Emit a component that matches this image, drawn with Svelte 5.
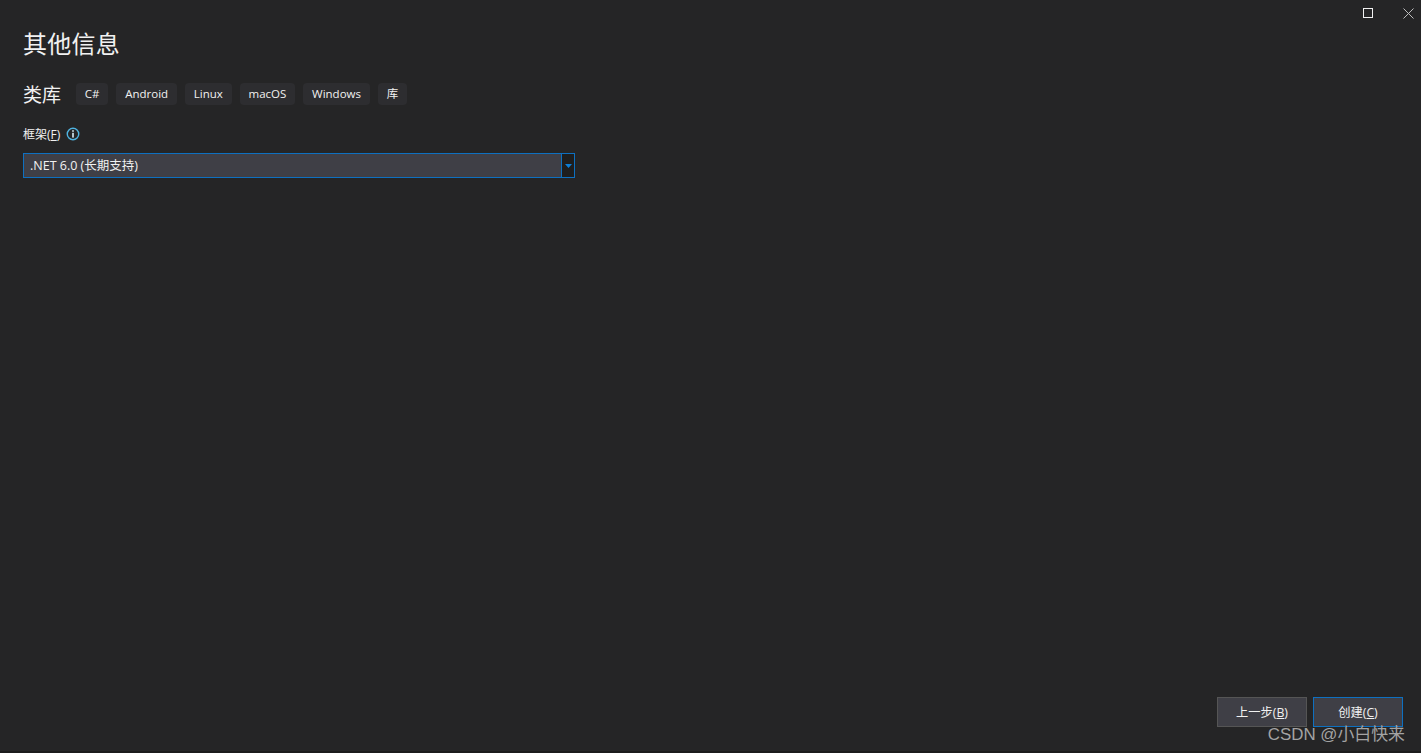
<script lang="ts">
	const tags = ['C#', 'Android', 'Linux', 'macOS', 'Windows', '库'];
</script>

<div class="dialog">
	<div class="window-controls">
		<button class="win-btn" aria-label="maximize">
			<svg width="10" height="10" viewBox="0 0 10 10"><rect x="0.5" y="0.5" width="9" height="9" fill="none" stroke="#f1f1f1" /></svg>
		</button>
		<button class="win-btn" aria-label="close">
			<svg width="11" height="11" viewBox="0 0 11 11"><path d="M0.5 0.5 L10.5 10.5 M10.5 0.5 L0.5 10.5" fill="none" stroke="#bdbdbd" /></svg>
		</button>
	</div>

	<main class="content">
		<h1>其他信息</h1>

		<div class="template-row">
			<span class="template-name">类库</span>
			<div class="tags">
				{#each tags as tag}
					<span class="tag">{tag}</span>
				{/each}
			</div>
		</div>

		<div class="field-label">
			<span>框架(<u>F</u>)</span>
			<svg width="14" height="14" viewBox="0 0 14 14">
				<circle cx="7" cy="7" r="5.75" fill="none" stroke="#4fb3e0" stroke-width="1.4" />
				<rect x="6.2" y="3.2" width="1.6" height="1.6" fill="#d8eef8" />
				<rect x="6.2" y="5.8" width="1.6" height="4.8" fill="#d8eef8" />
			</svg>
		</div>

		<div class="combo">
			<span class="combo-value">.NET 6.0 (长期支持)</span>
			<span class="combo-arrow">
				<svg width="7" height="4" viewBox="0 0 7 4"><path d="M0 0 H7 L3.5 4 Z" fill="#0e7fd6" /></svg>
			</span>
		</div>
	</main>

	<footer class="actions">
		<button class="action">上一步(<u>B</u>)</button>
		<button class="action primary">创建(<u>C</u>)</button>
	</footer>

	<div class="watermark">CSDN @小白快来</div>
</div>

<style>
	:global(body) {
		margin: 0;
		background: #252526;
	}

	.dialog {
		position: relative;
		height: 751px;
		border-bottom: 2px solid #1c1c1c;
		background: #252526;
		color: #f1f1f1;
		font-family: "Open Sans", "Noto Sans CJK SC", sans-serif;
		display: flex;
		flex-direction: column;
		overflow: hidden;
	}

	.window-controls {
		position: absolute;
		top: 0;
		right: 0;
		display: flex;
		gap: 14px;
	}

	.win-btn {
		width: 26px;
		height: 26px;
		padding: 0;
		background: none;
		border: 0;
		display: flex;
		align-items: center;
		justify-content: center;
	}

	.content {
		flex: 1;
		padding: 27px 0 0 23px;
	}

	h1 {
		margin: 0;
		font-size: 24px;
		font-weight: 400;
		line-height: 34px;
		letter-spacing: 0.25px;
		color: #f1f1f1;
	}

	.template-row {
		display: flex;
		align-items: center;
		margin-top: 22px;
		height: 22px;
	}

	.template-name {
		font-size: 19px;
		width: 53px;
	}

	.tags {
		display: flex;
		gap: 8px;
	}

	.tag {
		height: 22px;
		line-height: 21px;
		padding: 0 8.85px;
		background: #2d2d30;
		border-radius: 4px;
		font-size: 11.5px;
		color: #f1f1f1;
	}

	.field-label {
		display: flex;
		align-items: center;
		gap: 6px;
		margin-top: 19px;
		height: 20px;
		font-size: 12px;
	}

	.combo {
		display: flex;
		width: 552px;
		height: 25px;
		margin-top: 9px;
		box-sizing: border-box;
		border: 1px solid #0e70c0;
		font-size: 12.5px;
	}

	.combo-value {
		flex: 1;
		background: #3f3f46;
		padding-left: 6px;
		line-height: 23px;
	}

	.combo-arrow {
		width: 12px;
		border-left: 1px solid #0e70c0;
		background: #1e1e1e;
		display: flex;
		align-items: center;
		justify-content: center;
	}

	.actions {
		display: flex;
		justify-content: flex-end;
		gap: 6px;
		padding: 0 18px 24px 0;
	}

	.action {
		width: 90px;
		height: 30px;
		padding: 0 0 1px;
		box-sizing: border-box;
		background: #3f3f46;
		border: 1px solid #555555;
		color: #f1f1f1;
		font-family: inherit;
		font-size: 12.25px;
	}

	.action.primary {
		border-color: #0e70c0;
	}

	.watermark {
		position: absolute;
		right: 16px;
		top: 723px;
		font-family: "Liberation Sans", "Noto Sans CJK SC", sans-serif;
		font-size: 16.9px;
		line-height: 24px;
		color: #a3a3a3;
	}
</style>
